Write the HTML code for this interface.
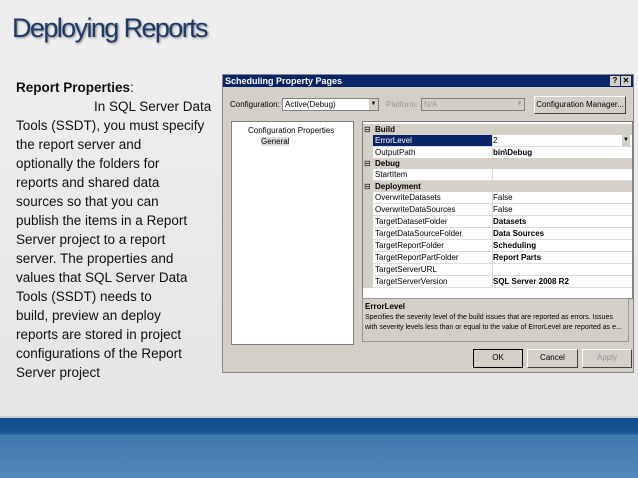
<!DOCTYPE html>
<html><head><style>
body{margin:0;width:638px;height:478px;overflow:hidden;background:linear-gradient(180deg,#efefef,#e3e3e3);font-family:"Liberation Sans",sans-serif;position:relative}
.t{position:absolute;left:12px;top:13px;font-size:27px;color:#1f3a66;letter-spacing:-1.6px;text-shadow:1px 1px 2px #888;white-space:nowrap}
.txt{position:absolute;left:16px;top:78px;width:205px;font-size:13.5px;line-height:19px;color:#111;white-space:nowrap}
.band{position:absolute;left:0;top:418px;width:638px;height:60px;background:linear-gradient(180deg,#0d4a87 0,#1b5a98 16px,#3f78ad 17px,#5189bf 60px)}
.band:before{content:"";position:absolute;left:0;top:-2px;width:638px;height:2px;background:#c8ced6}
.dlg{position:absolute;left:222px;top:74px;width:412px;height:299px;background:#d4d0c8;border:1px solid #888;box-sizing:border-box;font-size:8px;color:#000}
.tb{position:absolute;left:0;top:0;right:0;height:12px;background:#0a246a;color:#fff;font-weight:bold;font-size:9px;line-height:12px;padding-left:2px}
.tb b{position:absolute;top:1px;width:10px;height:10px;background:#d4d0c8;color:#000;font-size:8px;line-height:10px;text-align:center}
.a{position:absolute}
.box{background:#fff;border:1px solid #808080}
.btn{position:absolute;background:#d4d0c8;border:1px solid;border-color:#fff #404040 #404040 #fff;text-align:center;line-height:16px}
.grid{position:absolute;left:139px;top:46px;width:269px;height:176px;background:#fff;border:1px solid #808080}
.r{position:absolute;left:0;width:269px;height:11px;line-height:11px}
.r .l{position:absolute;left:10px;width:117px;height:11px;border-bottom:1px solid #ddd;border-right:1px solid #ddd;padding-left:2px}
.r .v{position:absolute;left:128px;width:139px;height:11px;border-bottom:1px solid #ddd;padding-left:2px}
.r.c{background:#d4d0c8;font-weight:bold;padding-left:12px;box-sizing:border-box}
.r.c:before{content:"⊟";position:absolute;left:1px;font-weight:normal}
.r:not(.c):before{content:"";position:absolute;left:0;top:0;width:10px;height:12px;background:#d4d0c8}
</style></head><body>
<div class="t">Deploying Reports</div>
<div class="txt"><b>Report Properties</b>:<br><span style="padding-left:78px">In SQL Server Data</span><br>Tools (SSDT), you must specify<br>the report server and<br>optionally the folders for<br>reports and shared data<br>sources so that you can<br>publish the items in a Report<br>Server project to a report<br>server. The properties and<br>values that SQL Server Data<br>Tools (SSDT) needs to<br>build, preview an deploy<br>reports are stored in project<br>configurations of the Report<br>Server project</div>
<div class="dlg">
<div class="tb">Scheduling Property Pages<b style="right:13px">?</b><b style="right:2px">✕</b></div>
<div class="a" style="left:7px;top:25px">Configuration:</div>
<div class="a box" style="left:59px;top:23px;width:93px;height:11px;line-height:11px;padding-left:2px">Active(Debug)<span style="position:absolute;right:0;top:0;width:9px;height:11px;background:#d4d0c8;text-align:center;font-size:6px">▼</span></div>
<div class="a" style="left:163px;top:25px;color:#999">Platform:</div>
<div class="a box" style="left:198px;top:23px;width:100px;height:11px;line-height:11px;padding-left:2px;background:#d4d0c8;color:#999">N/A<span style="position:absolute;right:0;top:0;width:9px;height:11px;text-align:center;font-size:6px">▼</span></div>
<div class="btn" style="left:311px;top:21px;width:90px;height:16px">Configuration Manager...</div>
<div class="a box" style="left:8px;top:46px;width:121px;height:222px"><div style="padding:3px 0 0 16px;line-height:11px">Configuration Properties<br><span style="margin-left:13px;background:#ddd">General</span></div></div>
<div class="grid">
<div class="r c" style="top:2px">Build</div>
<div class="r" style="top:13px"><div class="l" style="background:#0a246a;color:#fff">ErrorLevel</div><div class="v">2<span style="position:absolute;right:2px;width:8px;background:#d4d0c8;font-size:6px;text-align:center">▼</span></div></div>
<div class="r" style="top:25px"><div class="l">OutputPath</div><div class="v"><b>bin\Debug</b></div></div>
<div class="r c" style="top:36px">Debug</div>
<div class="r" style="top:47px"><div class="l">StartItem</div><div class="v"></div></div>
<div class="r c" style="top:59px">Deployment</div>
<div class="r" style="top:70px"><div class="l">OverwriteDatasets</div><div class="v">False</div></div>
<div class="r" style="top:82px"><div class="l">OverwriteDataSources</div><div class="v">False</div></div>
<div class="r" style="top:94px"><div class="l">TargetDatasetFolder</div><div class="v"><b>Datasets</b></div></div>
<div class="r" style="top:106px"><div class="l">TargetDataSourceFolder</div><div class="v"><b>Data Sources</b></div></div>
<div class="r" style="top:118px"><div class="l">TargetReportFolder</div><div class="v"><b>Scheduling</b></div></div>
<div class="r" style="top:130px"><div class="l">TargetReportPartFolder</div><div class="v"><b>Report Parts</b></div></div>
<div class="r" style="top:142px"><div class="l">TargetServerURL</div><div class="v"></div></div>
<div class="r" style="top:154px"><div class="l">TargetServerVersion</div><div class="v"><b>SQL Server 2008 R2</b></div></div>
</div>
<div class="a" style="left:139px;top:223px;width:267px;height:44px;border:1px solid #999;padding:3px 2px;box-sizing:border-box;line-height:10px;font-size:7px;white-space:nowrap;overflow:hidden"><b style="font-size:8px">ErrorLevel</b><br>Specifies the severity level of the build issues that are reported as errors. Issues<br>with severity levels less than or equal to the value of ErrorLevel are reported as e...</div>
<div class="btn" style="left:250px;top:274px;width:48px;height:17px;border:1px solid #000">OK</div>
<div class="btn" style="left:304px;top:274px;width:49px;height:17px">Cancel</div>
<div class="btn" style="left:359px;top:274px;width:48px;height:17px;color:#999">Apply</div>
</div>
<div class="band"></div>
</body></html>
